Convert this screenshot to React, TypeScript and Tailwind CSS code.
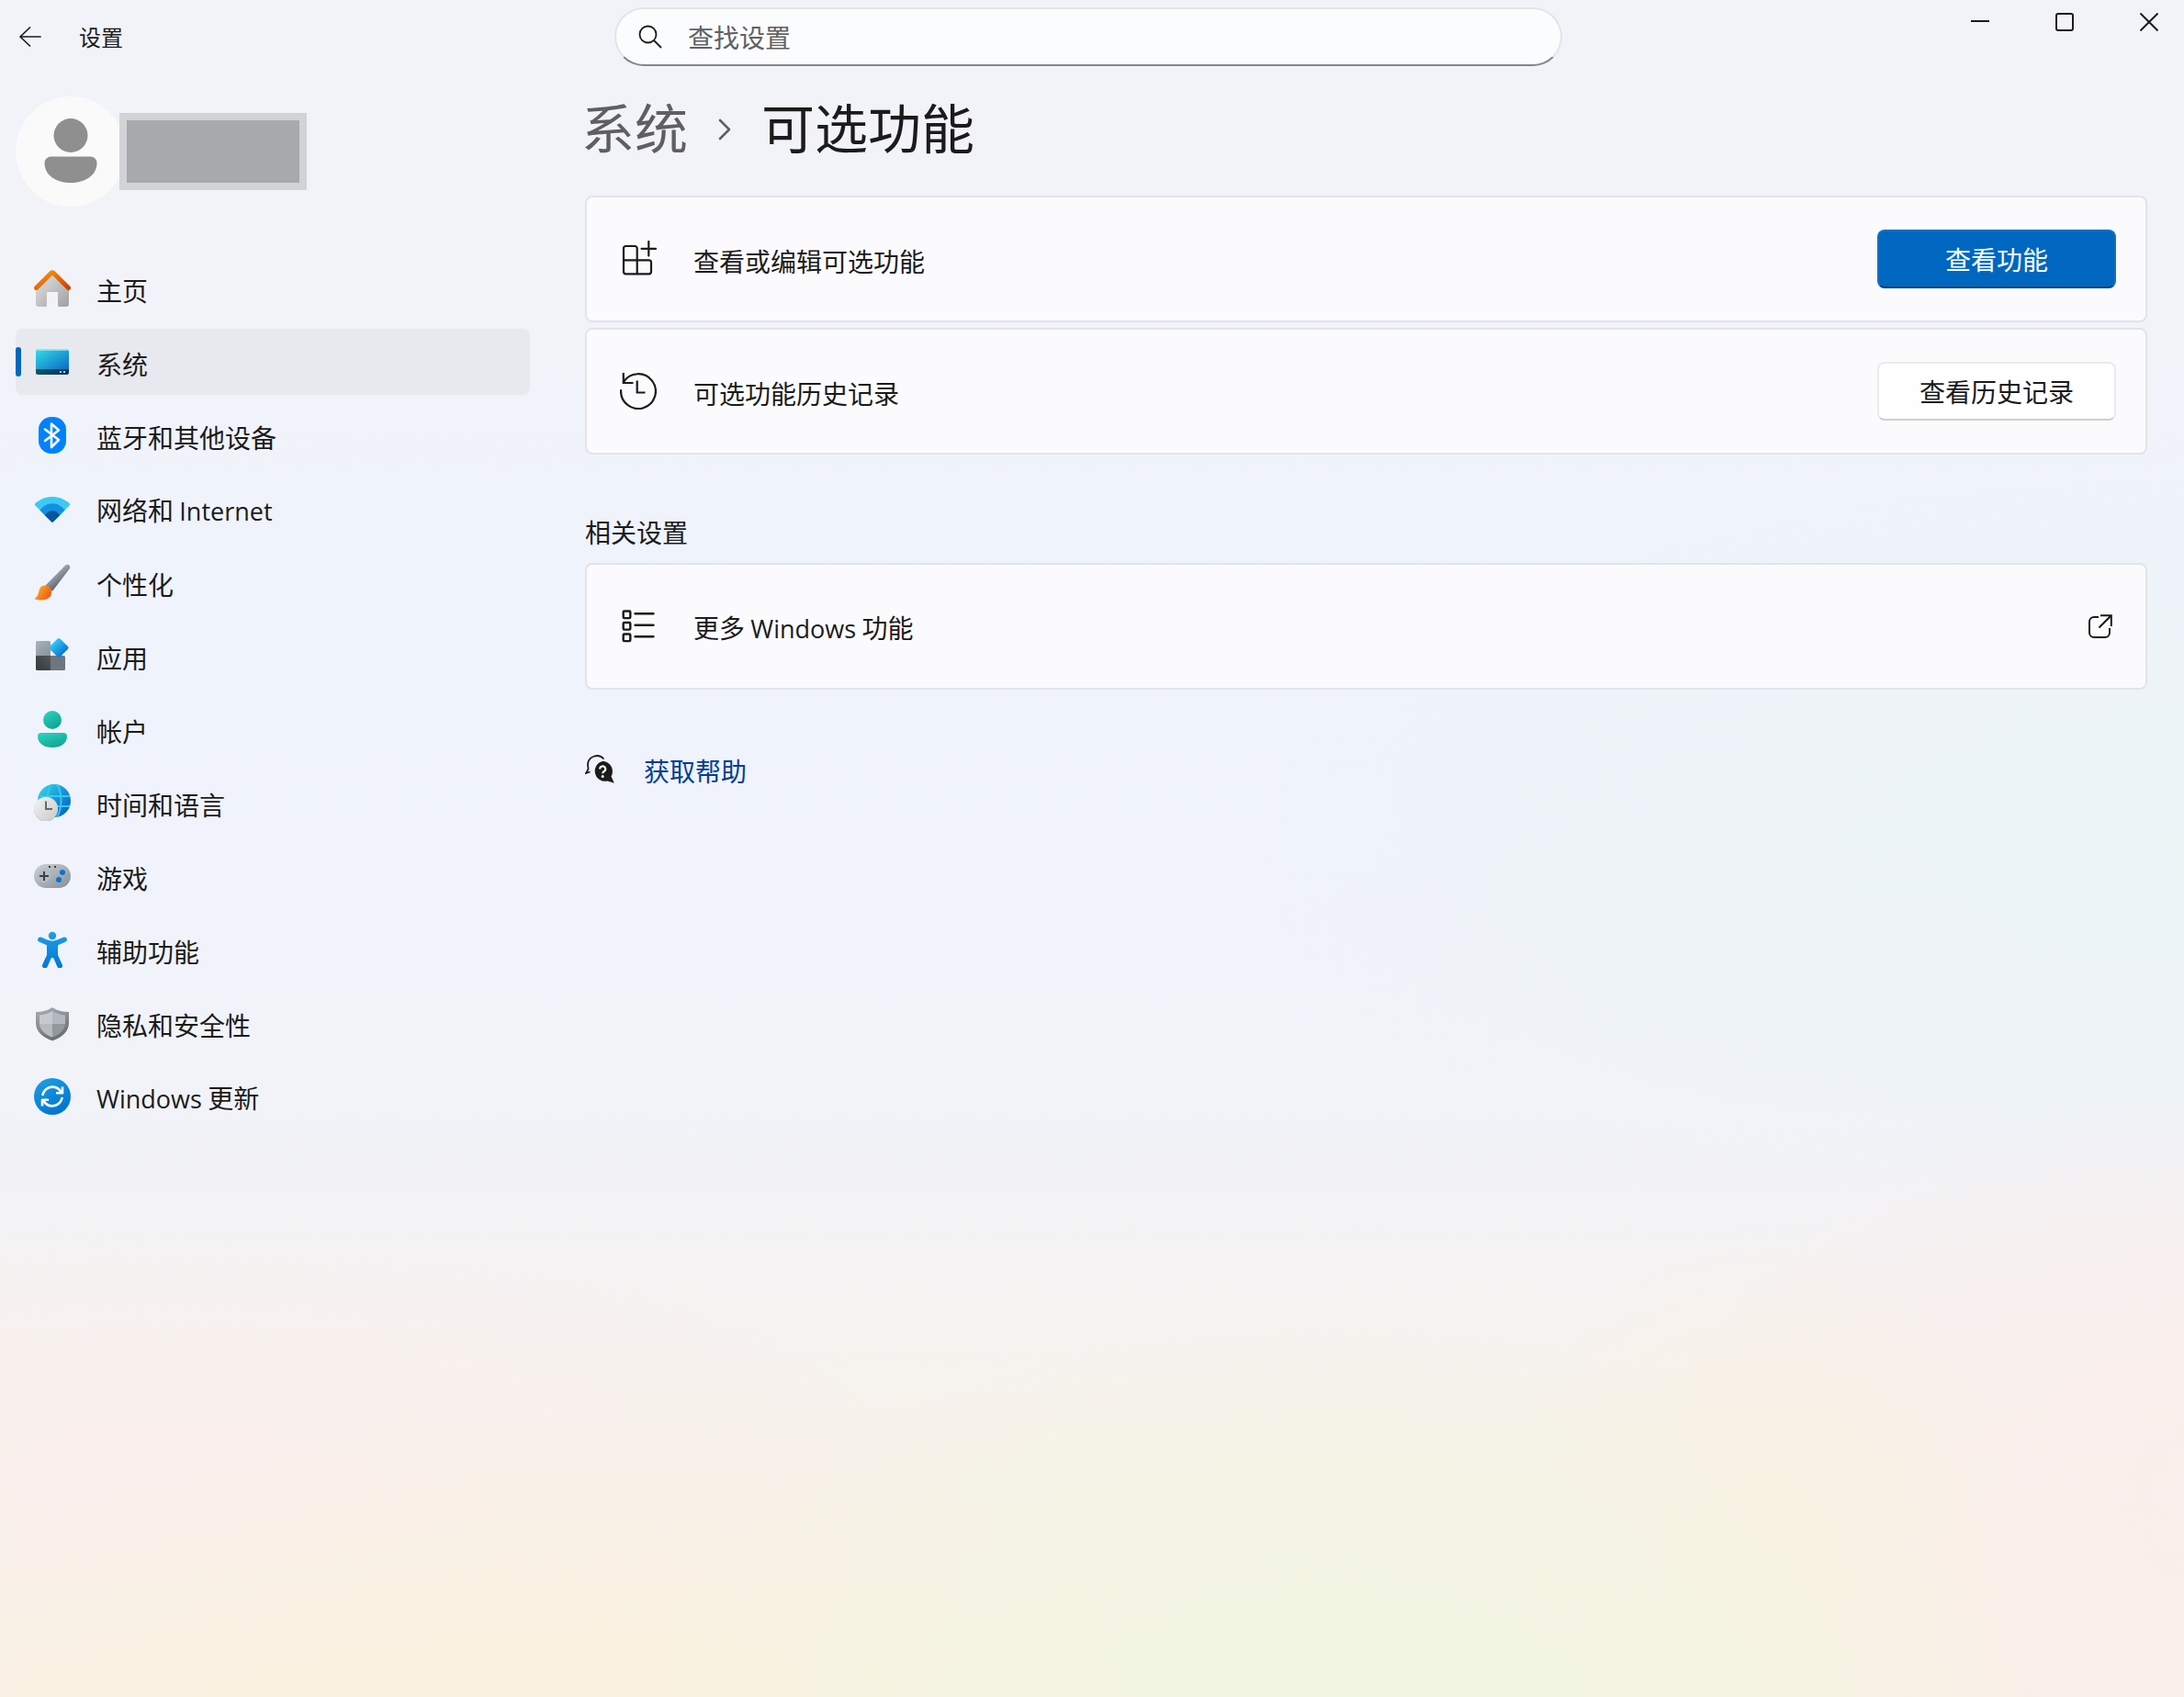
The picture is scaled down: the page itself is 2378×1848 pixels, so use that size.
import React from 'react';

function HomeIcon() {
  return (
    <svg viewBox="0 0 40 40" className="h-10 w-10 shrink-0" aria-hidden="true">
      <defs>
        <linearGradient id="home-wall" x1="0" y1="0" x2="1" y2="1">
          <stop offset="0" stopColor="#e4e4e4" />
          <stop offset="1" stopColor="#a0a0a0" />
        </linearGradient>
        <linearGradient id="home-roof" x1="0" y1="0" x2="1" y2="1">
          <stop offset="0" stopColor="#f99a11" />
          <stop offset="1" stopColor="#d13f04" />
        </linearGradient>
      </defs>
      <path d="M2 19 20 4l18 15v18a3 3 0 0 1-3 3h-7.500a1.500 1.500 0 0 1-1.500-1.500V25a1 1 0 0 0-1-1H15a1 1 0 0 0-1 1v13.500a1.500 1.500 0 0 1-1.500 1.500H5a3 3 0 0 1-3-3z" fill="url(#home-wall)" />
      <path d="M2.500 19.500 18.800 3.200a1.700 1.700 0 0 1 2.400 0l16.300 16.300" fill="none" stroke="url(#home-roof)" strokeWidth="5" strokeLinecap="round" strokeLinejoin="round" />
    </svg>
  );
}

function SystemIcon() {
  return (
    <svg viewBox="0 0 40 40" className="h-10 w-10 shrink-0" aria-hidden="true">
      <defs>
        <linearGradient id="sys-screen" x1="0" y1="0" x2="1" y2="1">
          <stop offset="0" stopColor="#33dde6" />
          <stop offset="1" stopColor="#0a6cc4" />
        </linearGradient>
        <linearGradient id="sys-bar" x1="0" y1="0" x2="1" y2="0">
          <stop offset="0" stopColor="#0f5468" />
          <stop offset="1" stopColor="#06345c" />
        </linearGradient>
      </defs>
      <path d="M2 8.500A2.500 2.500 0 0 1 4.500 6h31A2.500 2.500 0 0 1 38 8.500V28H2z" fill="url(#sys-screen)" />
      <path d="M2 8.500A2.500 2.500 0 0 1 4.500 6h31A2.500 2.500 0 0 1 38 8.500L37 7.800H3z" fill="#8ceaf0" />
      <path d="M2 28h36v3.500a2.500 2.500 0 0 1-2.500 2.500h-31A2.500 2.500 0 0 1 2 31.500z" fill="url(#sys-bar)" />
      <path d="M28 30h2v2h-2zM32 30h2v2h-2z" fill="#a9cbd8" />
    </svg>
  );
}

function BluetoothIcon() {
  return (
    <svg viewBox="0 0 40 40" className="h-10 w-10 shrink-0" aria-hidden="true">
      <rect x="5" y="0" width="30" height="40" rx="14" fill="#0082fc" />
      <path d="m12 13.500 15 11.500-8 8V7.500l8 7L12 26" fill="none" stroke="#fff" strokeWidth="2.600" strokeLinecap="round" strokeLinejoin="round" />
    </svg>
  );
}

function NetworkIcon() {
  return (
    <svg viewBox="0 0 40 40" className="h-10 w-10 shrink-0" aria-hidden="true">
      <path d="M1.200 16.200a1.300 1.300 0 0 1 .1-1.900C6.500 9.500 13 7 20 7s13.500 2.500 18.700 7.300a1.300 1.300 0 0 1 .1 1.900L20.900 34.300a1.300 1.300 0 0 1-1.800 0z" fill="#3bc9f5" />
      <path d="M6.400 21.400C10 17 15 14.200 20 14.200S30 17 33.600 21.400L20.900 34.300a1.300 1.300 0 0 1-1.800 0z" fill="#1390df" />
      <path d="M11.800 26.900C14 24 17 22.200 20 22.200s6 1.800 8.200 4.700l-7.300 7.400a1.300 1.300 0 0 1-1.800 0z" fill="#0b55a0" />
    </svg>
  );
}

function BrushIcon() {
  return (
    <svg viewBox="0 0 40 40" className="h-10 w-10 shrink-0" aria-hidden="true">
      <defs>
        <linearGradient id="brush-handle" x1="0.300" y1="0.300" x2="0.600" y2="0.700">
          <stop offset="0" stopColor="#a7b0b9" />
          <stop offset="1" stopColor="#666d74" />
        </linearGradient>
        <linearGradient id="brush-tip" x1="0" y1="0.200" x2="1" y2="0.800">
          <stop offset="0" stopColor="#fcb528" />
          <stop offset="1" stopColor="#ec5212" />
        </linearGradient>
      </defs>
      <path d="M34 1.800c3.200-2.600 6.600.6 4.400 4L20 30l-7.500-6.500z" fill="url(#brush-handle)" />
      <path d="M1.500 37.200c-.9.400-.8 1.300.2 1.600 8 1.600 17 .2 17.300-7.300.1-4.600-3-7.800-7-7.900-8.700.2-4.900 10.300-10.500 13.600z" fill="url(#brush-tip)" />
    </svg>
  );
}

function AppsIcon() {
  return (
    <svg viewBox="0 0 40 40" className="h-10 w-10 shrink-0" aria-hidden="true">
      <defs>
        <linearGradient id="apps-light" x1="0" y1="0" x2="1" y2="1">
          <stop offset="0" stopColor="#a9b2ba" />
          <stop offset="1" stopColor="#89929b" />
        </linearGradient>
        <linearGradient id="apps-dark" x1="0" y1="1" x2="1" y2="0">
          <stop offset="0" stopColor="#35383b" />
          <stop offset="1" stopColor="#54585c" />
        </linearGradient>
        <linearGradient id="apps-diamond" x1="0.200" y1="0.200" x2="0.800" y2="0.800">
          <stop offset="0" stopColor="#37c8f6" />
          <stop offset="1" stopColor="#0a74d2" />
        </linearGradient>
      </defs>
      <path d="M2 5.500A1.500 1.500 0 0 1 3.500 4h13A1.500 1.500 0 0 1 18 5.500V20H2z" fill="url(#apps-light)" />
      <path d="M2 20h16v16H3.500A1.500 1.500 0 0 1 2 34.500z" fill="url(#apps-dark)" />
      <path d="M18 20h14.500a1.500 1.500 0 0 1 1.500 1.500v13a1.500 1.500 0 0 1-1.500 1.500H18z" fill="#6e757d" />
      <path d="M25.700 1.500a1.900 1.900 0 0 1 2.600 0l8.700 8.600a1.900 1.900 0 0 1 0 2.600l-8.700 8.700a1.900 1.900 0 0 1-2.600 0L17 12.700a1.900 1.900 0 0 1 0-2.600z" fill="url(#apps-diamond)" />
    </svg>
  );
}

function AccountIcon() {
  return (
    <svg viewBox="0 0 40 40" className="h-10 w-10 shrink-0" aria-hidden="true">
      <defs>
        <linearGradient id="account" x1="0.200" y1="0" x2="0.800" y2="1">
          <stop offset="0" stopColor="#27d3bd" />
          <stop offset="1" stopColor="#10a08f" />
        </linearGradient>
      </defs>
      <circle cx="20" cy="10" r="10" fill="url(#account)" />
      <path d="M8 24h24a4 4 0 0 1 4 4c0 7.500-7 12-16 12S4 35.500 4 28a4 4 0 0 1 4-4z" fill="url(#account)" />
    </svg>
  );
}

function TimeIcon() {
  return (
    <svg viewBox="0 0 40 40" className="h-10 w-10 shrink-0" aria-hidden="true">
      <defs>
        <linearGradient id="globe" x1="0.100" y1="0.100" x2="0.900" y2="0.900">
          <stop offset="0" stopColor="#2fd3e0" />
          <stop offset="0.550" stopColor="#1590d6" />
          <stop offset="1" stopColor="#0a62c2" />
        </linearGradient>
        <linearGradient id="clock" x1="0" y1="0" x2="1" y2="1">
          <stop offset="0" stopColor="#f4f4f4" />
          <stop offset="1" stopColor="#c9c9cb" />
        </linearGradient>
        <clipPath id="globe-clip">
          <circle cx="22" cy="18" r="18" />
        </clipPath>
      </defs>
      <circle cx="22" cy="18" r="18" fill="url(#globe)" />
      <g clipPath="url(#globe-clip)" fill="none" stroke="#36c8ee" strokeWidth="2">
        <ellipse cx="22" cy="18" rx="7.500" ry="19" />
        <path d="M4 13h36M4 24h36" />
      </g>
      <circle cx="13" cy="27.500" r="13" fill="#9a9da3" opacity="0.600" />
      <circle cx="13" cy="26.800" r="13" fill="url(#clock)" />
      <path d="M13 18.500V27h7" fill="none" stroke="#6a6a6c" strokeWidth="2" />
    </svg>
  );
}

function GamingIcon() {
  return (
    <svg viewBox="0 0 40 40" className="h-10 w-10 shrink-0" aria-hidden="true">
      <defs>
        <linearGradient id="pad" x1="0" y1="0" x2="1" y2="1">
          <stop offset="0" stopColor="#ccd2d8" />
          <stop offset="1" stopColor="#868e96" />
        </linearGradient>
      </defs>
      <rect x="0" y="7" width="40" height="26" rx="13" fill="url(#pad)" />
      <circle cx="11" cy="20" r="7" fill="#b4bac0" />
      <path d="M11 15v10M6 20h10" stroke="#3c4043" strokeWidth="2" fill="none" />
      <path d="M16 9h2v2h-2zM22 9h2v2h-2z" fill="#3c4043" />
      <circle cx="31" cy="16" r="3" fill="#0a74d2" />
      <circle cx="27" cy="24" r="3" fill="#0a74d2" />
    </svg>
  );
}

function AccessibilityIcon() {
  return (
    <svg viewBox="0 0 40 40" className="h-10 w-10 shrink-0" aria-hidden="true">
      <defs>
        <linearGradient id="a11y" x1="0" y1="0" x2="0" y2="40" gradientUnits="userSpaceOnUse">
          <stop offset="0" stopColor="#1f9fe6" />
          <stop offset="1" stopColor="#0078d6" />
        </linearGradient>
      </defs>
      <circle cx="20" cy="5" r="4.200" fill="url(#a11y)" />
      <path d="M4.200 8.300c.6-1.500 2-2.300 3.500-1.700l7 3c3.400 1.400 7.200 1.400 10.600 0l7-3c1.500-.6 2.900.2 3.500 1.700.5 1.400-.2 2.800-1.600 3.400L26 15.300V26l4.800 10.500c.6 1.500 0 3.200-1.500 3.800-1.600.6-3.100 0-3.800-1.400L21.500 29.700c-.7-1.400-2.300-1.400-3 0l-4 9.200c-.7 1.400-2.200 2-3.800 1.400-1.500-.6-2.100-2.300-1.500-3.800L14 26V15.300l-8.200-3.600c-1.400-.6-2.100-2-1.600-3.400z" fill="url(#a11y)" />
    </svg>
  );
}

function ShieldIcon() {
  return (
    <svg viewBox="0 0 40 40" className="h-10 w-10 shrink-0" aria-hidden="true">
      <defs>
        <linearGradient id="shield-rim" x1="0" y1="0" x2="0.400" y2="1">
          <stop offset="0" stopColor="#a9b0b6" />
          <stop offset="1" stopColor="#6b7074" />
        </linearGradient>
      </defs>
      <path d="M20 3c5 3.200 10.500 5 18 5v12c0 9-7 15.500-17 19a3 3 0 0 1-2 0C9 35.500 2 29 2 20V8c7.500 0 13-1.800 18-5z" fill="url(#shield-rim)" />
      <path d="M20 7v14H6V11.500c5-.5 10-2 14-4.500z" fill="#c6cacf" />
      <path d="M20 7v14h14V11.500c-5-.5-10-2-14-4.500z" fill="#b2b8be" />
      <path d="M6 21h14v14.500C12 33 6.500 27.500 6 21z" fill="#b7bbc0" />
      <path d="M34 21H20v14.500C28 33 33.500 27.500 34 21z" fill="#92989e" />
    </svg>
  );
}

function UpdateIcon() {
  return (
    <svg viewBox="0 0 40 40" className="h-10 w-10 shrink-0" aria-hidden="true">
      <defs>
        <linearGradient id="update" x1="0.200" y1="0" x2="0.700" y2="1">
          <stop offset="0" stopColor="#1c9de4" />
          <stop offset="1" stopColor="#0073d1" />
        </linearGradient>
      </defs>
      <circle cx="20" cy="20" r="20" fill="url(#update)" />
      <g fill="none" stroke="#fff" strokeWidth="2.600" strokeLinejoin="round">
        <path d="M9.500 18c1.200-5 5.500-8.400 10.500-8.400 4 0 7.500 2 9.500 5.400" strokeLinecap="round" />
        <path d="M31 9.500v6.800h-7" />
        <path d="M30.500 22c-1.200 5-5.500 8.400-10.500 8.400-4 0-7.500-2-9.500-5.400" strokeLinecap="round" />
        <path d="M9 30.500v-6.800h7" />
      </g>
    </svg>
  );
}

function AddFeatureIcon() {
  return (
    <svg viewBox="0 0 40 40" className="h-10 w-10 shrink-0" fill="none" stroke="#1b1b1b" strokeWidth="2.200" aria-hidden="true">
      <path d="M18.700 36.300V8.500a2.500 2.500 0 0 0-2.500-2.500H6.500A2.500 2.500 0 0 0 4 8.500v25.300a2.500 2.500 0 0 0 2.500 2.500h25a2.500 2.500 0 0 0 2.500-2.500v-10a2.500 2.500 0 0 0-2.500-2.500H4" />
      <path d="M31.300 1v15.600M23.500 8.800h15.600" strokeLinecap="round" />
    </svg>
  );
}

function HistoryIcon() {
  return (
    <svg viewBox="0 0 40 40" className="h-10 w-10 shrink-0" fill="none" stroke="#1b1b1b" strokeWidth="2.200" aria-hidden="true">
      <path d="M1.100 19A18.900 18.900 0 1 0 4 10" strokeLinecap="round" />
      <path d="M3.800 0v11h10.700M18.700 8.500v13h8.800" />
    </svg>
  );
}

function ListIcon() {
  return (
    <svg viewBox="0 0 40 40" className="h-10 w-10 shrink-0" fill="none" stroke="#1b1b1b" strokeWidth="2.400" aria-hidden="true">
      <rect x="3.700" y="3.500" width="7.600" height="7.600" rx="1" />
      <rect x="3.700" y="16" width="7.600" height="7.600" rx="1" />
      <rect x="3.700" y="28.500" width="7.600" height="7.600" rx="1" />
      <path d="M16.500 6.300h20M16.500 18.800h20M16.500 31.300h20" strokeLinecap="round" />
    </svg>
  );
}

function HelpIcon() {
  return (
    <svg viewBox="0 0 32 32" className="h-8 w-8 shrink-0" fill="none" aria-hidden="true">
      <path d="M20.500 5.500A10 10 0 0 0 3 12c.2 2.500.8 3.500.3 5L1 21l4.500-1.500" stroke="#1b1b1b" strokeWidth="1.800" />
      <path d="M19 8a11 11 0 0 1 9.500 16.500l3.300 7.200-7.200-2.300A11 11 0 1 1 19 8z" fill="#1b1b1b" />
      <path d="M16.200 16.500a3 3 0 1 1 4.400 2.600c-1 .6-1.400 1.100-1.400 2.200" stroke="#fff" strokeWidth="2.200" />
      <circle cx="19.200" cy="24.600" r="1.500" fill="#fff" />
    </svg>
  );
}

const navItems = [
  { label: '主页', icon: HomeIcon },
  { label: '系统', icon: SystemIcon, active: true },
  { label: '蓝牙和其他设备', icon: BluetoothIcon },
  { label: '网络和', latinAfter: 'Internet', icon: NetworkIcon },
  { label: '个性化', icon: BrushIcon },
  { label: '应用', icon: AppsIcon },
  { label: '帐户', icon: AccountIcon },
  { label: '时间和语言', icon: TimeIcon },
  { label: '游戏', icon: GamingIcon },
  { label: '辅助功能', icon: AccessibilityIcon },
  { label: '隐私和安全性', icon: ShieldIcon },
  { label: '更新', latinBefore: 'Windows', icon: UpdateIcon },
];

function Latin({ children }: { children: React.ReactNode }) {
  return <span className="font-['Open_Sans','Noto_Sans',sans-serif] text-[27px]">{children}</span>;
}

function TitleBar() {
  return (
    <header className="grid grid-cols-[1fr_1032px_1fr] pt-2 pr-2">
      <div className="flex h-16 items-center gap-10 pl-5">
        <button type="button" aria-label="返回">
          <svg viewBox="0 0 26 26" className="h-[26px] w-[26px]" fill="none" stroke="#1b1b1b" strokeWidth="1.700" strokeLinecap="round" strokeLinejoin="round" aria-hidden="true">
            <path d="M12.500 3 2 13l10.500 10M2 13h22" />
          </svg>
        </button>
        <span className="text-2xl">设置</span>
      </div>
      <label className="flex h-16 items-center gap-7 rounded-full border-2 border-[#e3e4e8] border-b-[#868686] bg-[#fbfcfd] px-6">
        <svg viewBox="0 0 26 26" className="h-[26px] w-[26px] shrink-0" fill="none" stroke="#1b1b1b" strokeWidth="1.800" aria-hidden="true">
          <circle cx="10.500" cy="10.500" r="9" />
          <path d="m17 17 8 8" />
        </svg>
        <input
          type="search"
          aria-label="查找设置"
          placeholder="查找设置"
          className="min-w-0 flex-1 bg-transparent text-[28px] leading-10 outline-none placeholder:text-[#616161] placeholder:opacity-100"
        />
      </label>
      <div className="flex h-8 items-center justify-end gap-[72px] pr-5">
        <button type="button" aria-label="最小化">
          <svg viewBox="0 0 20 20" className="h-5 w-5" stroke="#1b1b1b" strokeWidth="2" aria-hidden="true">
            <path d="M0 9h20" />
          </svg>
        </button>
        <button type="button" aria-label="最大化">
          <svg viewBox="0 0 20 20" className="h-5 w-5" fill="none" stroke="#1b1b1b" strokeWidth="2" aria-hidden="true">
            <rect x="1" y="1" width="18" height="18" rx="2" />
          </svg>
        </button>
        <button type="button" aria-label="关闭">
          <svg viewBox="0 0 20 20" className="h-5 w-5" stroke="#1b1b1b" strokeWidth="2" aria-hidden="true">
            <path d="m0.500 0.500 19 19M19.500 0.500l-19 19" />
          </svg>
        </button>
      </div>
    </header>
  );
}

function Sidebar() {
  return (
    <aside className="w-[560px] shrink-0">
      <div className="mb-[53px] flex items-center">
        <svg viewBox="0 0 120 120" className="h-[120px] w-[120px]" aria-hidden="true">
          <circle cx="60" cy="60" r="60" fill="#fafafa" />
          <circle cx="60" cy="42.500" r="18.500" fill="#8f8f8f" />
          <path d="M38.500 65.500h43a7 7 0 0 1 7 7C88.500 86 76 94 60 94s-28.500-8-28.500-21.500a7 7 0 0 1 7-7z" fill="#8f8f8f" />
        </svg>
        <div className="-ml-[7px] h-[84px] w-[204px] border-8 border-[#d2d3d6] bg-[#a8a9ad]" />
      </div>
      <nav>
        <ul className="flex flex-col gap-2">
          {navItems.map((item) => (
            <li key={item.label}>
              <a
                href="#"
                aria-current={item.active ? 'page' : undefined}
                className={`relative flex h-[72px] items-center gap-7 rounded-lg pl-5 ${item.active ? 'bg-[#e8e9ee]' : ''}`}
              >
                {item.active && <span className="absolute top-5 left-0 h-8 w-1.5 rounded-full bg-[#0067c0]" />}
                <item.icon />
                <span className="pt-1 text-[28px] leading-10">
                  {item.latinBefore && <><Latin>{item.latinBefore}</Latin> </>}
                  {item.label}
                  {item.latinAfter && <> <Latin>{item.latinAfter}</Latin></>}
                </span>
              </a>
            </li>
          ))}
        </ul>
      </nav>
    </aside>
  );
}

function Card({ icon, title, children }: { icon: React.ReactNode; title: React.ReactNode; children: React.ReactNode }) {
  return (
    <div className="flex h-[138px] items-center gap-10 rounded-lg border-2 border-[#e2e4ea] bg-[#fbfbfd] pr-8 pl-9">
      {icon}
      <span className="flex-1 pt-1 text-[28px] leading-10">{title}</span>
      {children}
    </div>
  );
}

export default function App() {
  return (
    <div className="min-h-screen bg-[radial-gradient(32%_24%_at_61%_102%,#f0f6e1_0%,#f1f6e2b0_40%,#f1f6e200_100%),radial-gradient(12%_20%_at_81%_92%,#faf2e2_0%,#faf2e200_100%),radial-gradient(26%_24%_at_102%_88%,#fbeeec_0%,#fbeeec90_55%,#fbeeec00_100%),radial-gradient(34%_20%_at_24%_104%,#fbf2dd_0%,#fbf2dd00_100%),radial-gradient(34%_14%_at_8%_87%,#fbefed_0%,#fbefed00_100%),radial-gradient(45%_22%_at_102%_50%,#ecf4f6_0%,#ecf4f690_60%,#ecf4f600_100%),linear-gradient(180deg,#f1f3f8_0%,#f1f3f8_16%,#eff3fb_34%,#f0f3fb_50%,#f1f3f8_65%,#f5f2f2_76%,#f7f2ea_85%,#f9f1e5_100%)] font-['Noto_Sans_CJK_SC',sans-serif] text-[#1b1b1b]">
      <TitleBar />
      <div className="flex gap-[60px] pt-[33px] pr-10 pb-10 pl-[17px]">
        <Sidebar />
        <main className="min-w-0 flex-1">
          <h1 className="mb-11 -ml-1 flex h-16 items-center text-[58px] leading-[64px] font-normal">
            <a href="#" className="text-[#5f5f60]">系统</a>
            <svg viewBox="0 0 16 24" className="mx-8 mt-2 h-6 w-4" fill="none" stroke="#5f5f60" strokeWidth="2.600" strokeLinecap="round" strokeLinejoin="round" aria-hidden="true">
              <path d="m3 2 10 10L3 22" />
            </svg>
            可选功能
          </h1>

          <div className="flex flex-col gap-1.5">
            <Card icon={<AddFeatureIcon />} title="查看或编辑可选功能">
              <button type="button" className="h-16 w-[260px] rounded-lg border-2 border-[#1471c4] border-b-[#003f75] bg-[#0067c0] text-[28px] leading-10 text-white">
                查看功能
              </button>
            </Card>
            <Card icon={<HistoryIcon />} title="可选功能历史记录">
              <button type="button" className="h-16 w-[260px] rounded-lg border-2 border-[#ebebec] border-b-[#cfcfcf] bg-[#fefefe] text-[28px] leading-10">
                查看历史记录
              </button>
            </Card>
          </div>

          <h2 className="mt-16 mb-[14px] text-[28px] leading-10">相关设置</h2>
          <Card icon={<ListIcon />} title={<>更多 <Latin>Windows</Latin> 功能</>}>
            <a href="#" aria-label="打开更多 Windows 功能" className="mr-1">
              <svg viewBox="0 0 26 26" className="h-[26px] w-[26px]" fill="none" stroke="#1b1b1b" strokeWidth="2" aria-hidden="true">
                <path d="M11 3H6a5 5 0 0 0-5 5v12a5 5 0 0 0 5 5h12a5 5 0 0 0 5-5v-5" />
                <path d="M13 1.200h11.800V13M24.500 1.500 11.500 14.500" />
              </svg>
            </a>
          </Card>

          <div className="mt-16 flex items-center gap-8">
            <HelpIcon />
            <a href="#" className="pt-1 text-[28px] leading-10 text-[#003e92]">获取帮助</a>
          </div>
        </main>
      </div>
    </div>
  );
}
